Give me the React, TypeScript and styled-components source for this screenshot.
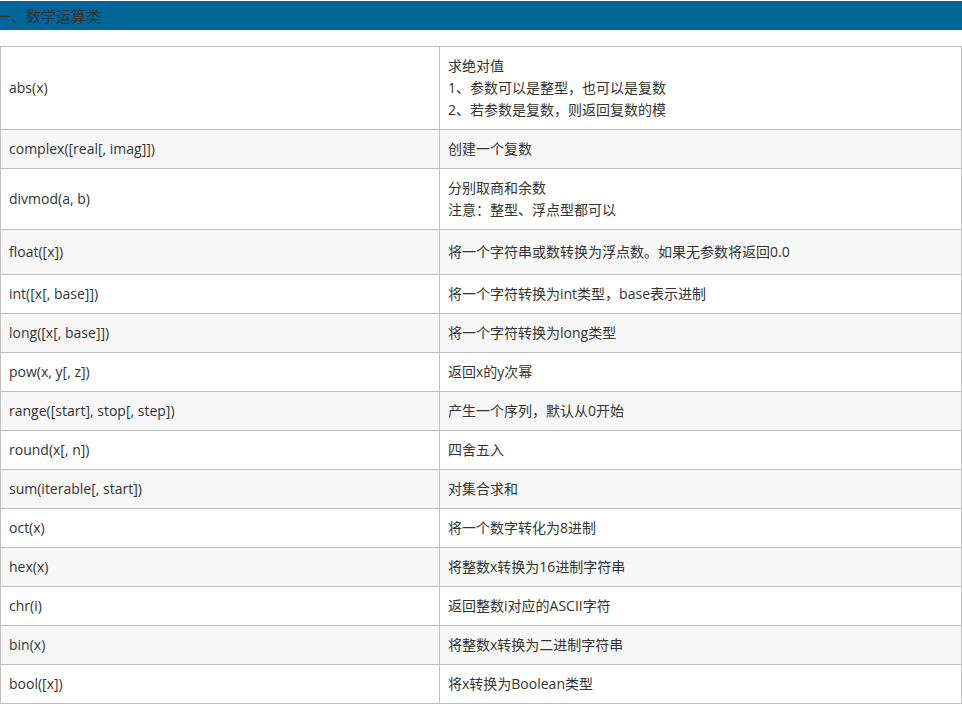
import React from "react";
import styled, { createGlobalStyle } from "styled-components";

const G = createGlobalStyle`
  body { margin: 0; background: #fff; font-family: "Open Sans", "Noto Sans CJK SC", sans-serif; color: #333; }
`;
const Header = styled.div`
  margin-top: 1px; height: 29px; background: #006699; color: #333;
  font-size: 15px; line-height: 30px; text-indent: -4px; overflow: hidden;
`;
const Table = styled.table`
  margin-top: 16px; width: 962px; border-collapse: collapse;
`;
const Row = styled.tr<{ $alt: boolean; $h: number }>`
  background: ${p => (p.$alt ? "#f7f7f7" : "#fff")};
  height: ${p => p.$h}px;
`;
const Cell = styled.td<{ $w?: number }>`
  border: 1px solid #c0c0c0; padding: 0 8px; vertical-align: middle;
  width: ${p => (p.$w ? p.$w + "px" : "auto")}; line-height: 22px;
  font-size: 14px;
`;
const Desc = styled(Cell)`font-size: 14px;`;

const rows: [string, string[], number][] = [
  ["abs(x)", ["求绝对值", "1、参数可以是整型，也可以是复数", "2、若参数是复数，则返回复数的模"], 83],
  ["complex([real[, imag]])", ["创建一个复数"], 39],
  ["divmod(a, b)", ["分别取商和余数", "注意：整型、浮点型都可以"], 61],
  ["float([x])", ["将一个字符串或数转换为浮点数。如果无参数将返回0.0"], 45],
  ["int([x[, base]])", ["将一个字符转换为int类型，base表示进制"], 39],
  ["long([x[, base]])", ["将一个字符转换为long类型"], 39],
  ["pow(x, y[, z])", ["返回x的y次幂"], 39],
  ["range([start], stop[, step])", ["产生一个序列，默认从0开始"], 39],
  ["round(x[, n])", ["四舍五入"], 39],
  ["sum(iterable[, start])", ["对集合求和"], 39],
  ["oct(x)", ["将一个数字转化为8进制"], 39],
  ["hex(x)", ["将整数x转换为16进制字符串"], 39],
  ["chr(i)", ["返回整数i对应的ASCII字符"], 39],
  ["bin(x)", ["将整数x转换为二进制字符串"], 39],
  ["bool([x])", ["将x转换为Boolean类型"], 39],
];

export default function App() {
  return (
    <>
      <G />
      <Header>一、数学运算类</Header>
      <Table>
        <tbody>
          {rows.map(([f, d, h], i) => (
            <Row key={f} $alt={i % 2 === 1} $h={h}>
              <Cell $w={422}>{f}</Cell>
              <Desc>{d.map((l, j) => <div key={j}>{l}</div>)}</Desc>
            </Row>
          ))}
        </tbody>
      </Table>
    </>
  );
}
